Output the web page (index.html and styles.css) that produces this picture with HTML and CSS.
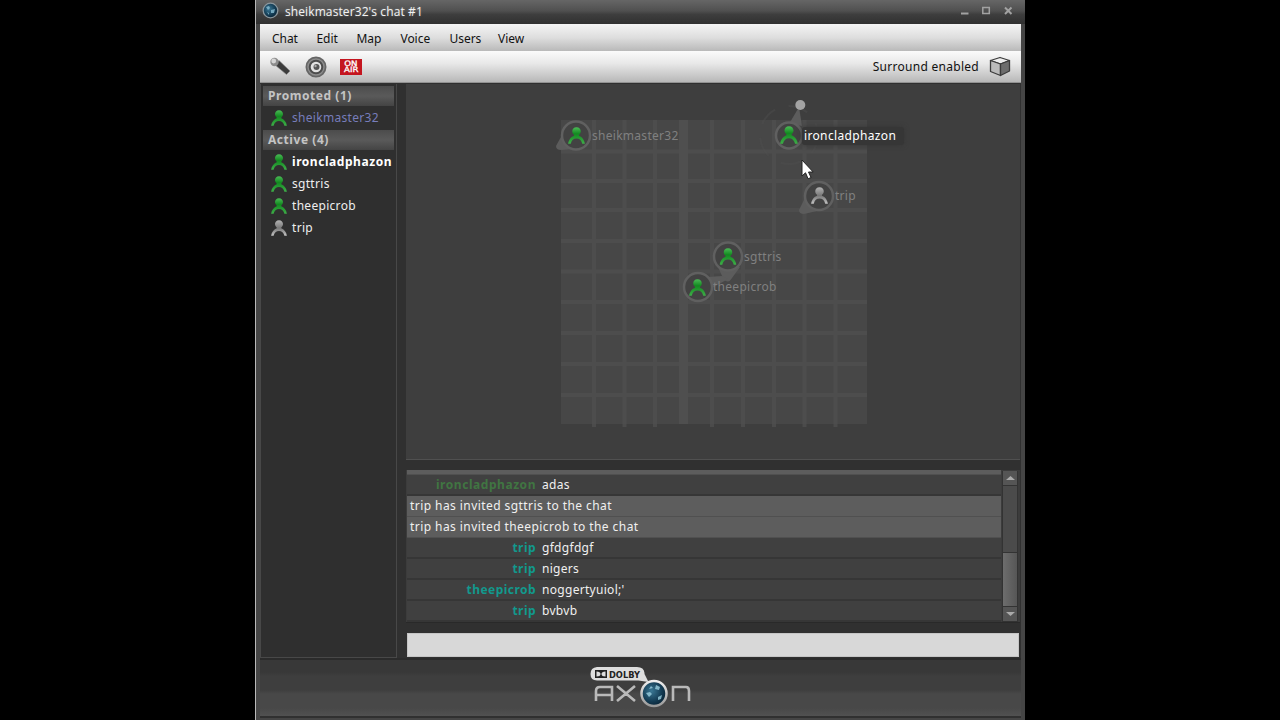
FILE: index.html
```html
<!DOCTYPE html>
<html lang="en">
<head>
<meta charset="utf-8">
<title>sheikmaster32's chat #1</title>
<link rel="stylesheet" href="styles.css">
</head>
<body>
<svg class="defs" width="0" height="0">
  <defs>
    <linearGradient id="green" x1="0" y1="0" x2="0" y2="1"><stop offset="0" stop-color="#4cbb57"/><stop offset=".4" stop-color="#128a20"/><stop offset="1" stop-color="#3fae49"/></linearGradient>
    <linearGradient id="grey" x1="0" y1="0" x2="0" y2="1"><stop offset="0" stop-color="#b4b4b4"/><stop offset=".5" stop-color="#777"/><stop offset="1" stop-color="#c4c4c4"/></linearGradient>
    <radialGradient id="globe" cx=".4" cy=".4" r=".7"><stop offset="0" stop-color="#3a7794"/><stop offset=".6" stop-color="#133b53"/><stop offset="1" stop-color="#071c2b"/></radialGradient>
    <linearGradient id="metal" x1="0" y1="0" x2="0" y2="1"><stop offset="0" stop-color="#eee"/><stop offset="1" stop-color="#999"/></linearGradient>
    <symbol id="person" viewBox="0 0 16 16"><path d="M8 .2c2.600 0 4 1.800 4 3.900 0 1.600-.9 2.700-1.700 3.300v.8c2.600.9 5.100 3.600 5.600 7.600h-2.500c-.7-3.200-2.600-4.900-5.400-4.900S3.300 12.600 2.600 15.800h-2.500c.5-4 3-6.700 5.600-7.600v-.8C4.900 6.800 4 5.700 4 4.100 4 2 5.400.2 8 .2z"/></symbol>
  </defs>
</svg>
<div class="window">
  <header class="titlebar">
    <svg class="app-icon" width="17" height="17" viewBox="0 0 17 17"><circle cx="8.500" cy="8.500" r="7.300" fill="url(#globe)" stroke="#8b979d" stroke-width="1.300"/><path d="M4 5l3-1 1 2-2 2zM9 8l4-1-1 4-3 0zM5 10l2 1 0 2z" fill="#8fc4da" opacity=".75"/></svg>
    <span class="title">sheikmaster32's chat #1</span>
    <svg class="controls" width="54" height="12" viewBox="0 0 54 12" fill="none" stroke="#a2a2a2"><path d="M1 8.500h7.500" stroke-width="2"/><path d="M22.800 2.500h6.500v6h-6.500z" stroke-width="1.500"/><path d="M45 2.500l6.500 6.500M51.500 2.500L45 9" stroke-width="2"/></svg>
  </header>
  <nav class="menu"><span>Chat</span><span>Edit</span><span>Map</span><span>Voice</span><span>Users</span><span>View</span></nav>
  <div class="toolbar">
    <svg class="mic" width="24" height="22" viewBox="0 0 24 22"><path d="M6.500 8.500l4.500-4 11 10.500-3.500 3.500z" fill="#3c3c3c" stroke="#888" stroke-width=".6"/><circle cx="6.500" cy="6" r="4.200" fill="#8d8d8d"/><circle cx="5.700" cy="5" r="2.400" fill="#d6d6d6"/></svg>
    <svg class="speaker" width="24" height="24" viewBox="0 0 24 24"><circle cx="12" cy="12" r="9.600" fill="#8d8d8d" stroke="#666" stroke-width="1.800"/><circle cx="12" cy="12" r="6.300" fill="#e2e2e2" stroke="#4c4c4c" stroke-width="2"/><circle cx="12.500" cy="12" r="3" fill="#555"/><circle cx="11.500" cy="11" r="1.200" fill="#aaa"/></svg>
    <div class="onair"><span>ON</span><span>AIR</span></div>
    <span class="surround">Surround enabled</span>
    <svg class="cube" width="22" height="22" viewBox="0 0 22 22" stroke="#3b3b3b" stroke-width="1.300" stroke-linejoin="round"><path d="M1.500 4.500L11 1.500 20.500 4.500 11.500 8z" fill="#eee"/><path d="M1.500 4.500l10 3.500V19.500l-10-4z" fill="#bbb"/><path d="M11.500 8l9-3.500v10.500l-9 4.500z" fill="#6d6d6d"/></svg>
  </div>
  <main class="content">
    <aside class="sidebar">
      <h2>Promoted (1)</h2>
      <div class="user promoted"><svg class="person green"><use href="#person"/></svg><span>sheikmaster32</span></div>
      <h2>Active (4)</h2>
      <div class="user self"><svg class="person green"><use href="#person"/></svg><span>ironcladphazon</span></div>
      <div class="user"><svg class="person green"><use href="#person"/></svg><span>sgttris</span></div>
      <div class="user"><svg class="person green"><use href="#person"/></svg><span>theepicrob</span></div>
      <div class="user"><svg class="person grey"><use href="#person"/></svg><span>trip</span></div>
    </aside>
    <section class="main">
      <div class="map">
        <svg class="grid" width="614" height="375" viewBox="406 84 614 375">
          <path d="M561 120h306v304H561z" fill="#474747"/>
          <path d="M594 120v307M624.500 120v307M655 120v307M712 120v307M743 120v307M774 120v307M804.500 120v307M835.500 120v307M561 151.500h306M561 181h306M561 210h306M561 241h306M561 271.500h306M561 302h306M561 333h306M561 364h306M561 395h306" stroke="#505050" stroke-width="4" opacity=".75"/>
          <path d="M683.500 120v304" stroke="#4f4f4f" stroke-width="9"/>
          <circle cx="789" cy="135" r="29" fill="none" stroke="#505050" stroke-width="2" stroke-dasharray="20 14" opacity=".4"/>
          <g fill="#5c5c5c"><path d="M562 135l-6 11q0 4 5 4l14-1z"/><path d="M799 107l-10 17 13 2z"/><path d="M805 198l-6 12q0 4 5 4l17-4z"/><path d="M718 267l5 11q5 7 9 0l8-11z"/><path d="M708 277l14-1 6 3-16 9z"/></g>
          <g fill="#424242" stroke="#606060" stroke-width="2.500"><circle cx="576" cy="135.500" r="14"/><circle cx="789" cy="135.500" r="13"/><circle cx="819" cy="196" r="14"/><circle cx="728" cy="256.500" r="14"/><circle cx="698" cy="287" r="14"/></g>
          <circle cx="800.300" cy="105" r="5" fill="#a3a3a3"/>
          <g fill="url(#green)"><use href="#person" x="567.500" y="127" width="18" height="17"/><use href="#person" x="780" y="126" width="18" height="18"/><use href="#person" x="719.500" y="248" width="17" height="17"/><use href="#person" x="689" y="279" width="17" height="17"/></g>
          <use href="#person" x="811" y="187" width="17" height="17" fill="url(#grey)"/>
        </svg>
        <span class="pin p1">sheikmaster32</span>
        <span class="pin p2">ironcladphazon</span>
        <span class="pin p3">trip</span>
        <span class="pin p4">sgttris</span>
        <span class="pin p5">theepicrob</span>
        <svg class="cursor" width="14" height="21" viewBox="0 0 14 21"><path d="M1 1v16l3.500-3.200 2.600 6 3-1.300-2.600-5.500h4.700z" fill="#fff" stroke="#222" stroke-width="1"/></svg>
      </div>
      <div class="chat">
        <div class="log">
          <div class="line system cut"></div>
          <div class="line"><b class="olive">ironcladphazon</b><span>adas</span></div>
          <div class="line system"><span>trip has invited sgttris to the chat</span></div>
          <div class="line system"><span>trip has invited theepicrob to the chat</span></div>
          <div class="line"><b>trip</b><span>gfdgfdgf</span></div>
          <div class="line"><b>trip</b><span>nigers</span></div>
          <div class="line"><b>theepicrob</b><span>noggertyuiol;'</span></div>
          <div class="line"><b>trip</b><span>bvbvb</span></div>
        </div>
        <div class="scroll">
          <div class="btn"><svg width="9" height="6"><path d="M0 5l4.500-4L9 5z" fill="#aaa"/></svg></div>
          <div class="track"></div>
          <div class="thumb"></div>
          <div class="btn"><svg width="9" height="6"><path d="M0 1l4.500 4L9 1z" fill="#aaa"/></svg></div>
        </div>
      </div>
      <div class="entry"></div>
    </section>
  </main>
  <footer class="footer">
    <svg width="104" height="46" viewBox="589 663 104 46">
      <path d="M597 667h40q7 0 7.500 6v1l4 8-10-1.500h-41.500q-6.500 0-6.500-6.500t6.500-7z" fill="#dedede"/>
      <path d="M595 670h12v8h-12z" fill="#222"/><path d="M596.500 671.500q4 0 4 2.500t-4 2.500zM605.500 671.500q-4 0-4 2.500t4 2.500z" fill="#dedede"/>
      <text x="609" y="677.500" class="dolby" textLength="31" lengthAdjust="spacingAndGlyphs">DOLBY</text>
      <g fill="none" stroke="#b9b9b9" stroke-width="2.600"><path d="M596 701v-10q0-4 4-4h12v14M597 695h15M617 686l18 15M635 686l-18 15M673 701v-14h13q3 0 3 4v10"/></g>
      <circle cx="654" cy="693.500" r="12.500" fill="url(#globe)" stroke="url(#metal)" stroke-width="2.500"/>
      <path d="M646 693l4-1 2 2-3 3zM656 685l4 2-1 3-4-1zM658 697l4-2-1 4-3 1zM651 686l2 2-4 1z" fill="#9bd0e0" opacity=".8"/>
    </svg>
  </footer>
</div>
</body>
</html>
```
FILE: styles.css
```css
* { box-sizing: border-box; }
body { margin: 0; width: 1280px; height: 720px; overflow: hidden; background: #000; font: 12px/16px "Noto Sans", "Open Sans", sans-serif; }
.defs { position: absolute; }
.window { width: 770px; height: 720px; margin-left: 255px; padding: 0 4px; border-left: 1px solid #b8b8b8; background: #454545; display: flex; flex-direction: column; }
.titlebar { height: 24px; margin: 0 -4px; padding: 0 11px 0 6px; flex: none; display: flex; align-items: center; background: linear-gradient(#666, #505050 45%, #3e3e3e 60%, #303030); }
.app-icon { margin-top: -3px; }
.title { margin-left: 6px; font: 12px/16px "Open Sans", sans-serif; color: #f2f2f2; text-shadow: 0 0 2px #aaa8; letter-spacing: .1px; flex: 1; }
.controls { margin-top: -2px; }
.menu { height: 27px; flex: none; padding-left: 12px; display: grid; grid-template-columns: 44.500px 40px 44px 49px 48.500px 60px; align-items: center; background: linear-gradient(#f4f4f4, #dedede 50%, #b9b9b9); color: #111; }
.menu span { margin-top: 2px; letter-spacing: -.05px; }
.toolbar { height: 32px; flex: none; padding: 0 10px 0 8px; display: flex; align-items: center; background: linear-gradient(#fbfbfb, #e8e8e8 40%, #b8b8b8); border-bottom: 1px solid #929292; }
.speaker { margin-left: 12px; }
.onair { margin-left: 12px; width: 22px; height: 16px; background: #c4151f; color: #fff; display: flex; flex-direction: column; align-items: center; font: 7.500px/7px "DejaVu Sans", sans-serif; padding-top: 1px; }
.onair span { height: 6.500px; transform: scaleX(1.15); -webkit-text-stroke: .3px #fff; }
.surround { margin-left: auto; margin-right: 10px; color: #111; letter-spacing: .28px; }
.content { height: 575px; flex: none; display: flex; background: #303030; border-top: 1px solid #303030; }
.sidebar { width: 137px; height: 574px; padding: 2px 3px 0 3px; background: #2f2f2f; border: 1px solid #484848; border-top: 0; }
.sidebar h2 { height: 20px; margin: 0 0 2px -1px; width: 131px; padding-left: 5px; font: bold 12px/20px "Noto Sans", sans-serif; letter-spacing: .55px; color: #c4c4c4; background: linear-gradient(#4c4c4c, #5a5a5a 50%, #444); }
.user { height: 22px; display: flex; align-items: center; padding: 0 0 3px 7px; color: #eee; white-space: nowrap; letter-spacing: .3px; }
.user span { margin-left: 5px; }
.promoted { color: #777dbb; }
.self { font-weight: bold; color: #fff; letter-spacing: .55px; }
.person { width: 16px; height: 16px; flex: none; }
.green { fill: url(#green); }
.grey { fill: url(#grey); }
.main { margin-left: 9px; width: 614px; display: flex; flex-direction: column; }
.map { position: relative; height: 376px; border-bottom: 1px solid #505050; background: #3e3e3e; }
.grid { display: block; }
.pin { position: absolute; color: #808080; letter-spacing: .28px; white-space: nowrap; }
.p1 { left: 186px; top: 44px; }
.p2 { left: 396px; top: 43px; padding: 1px 8px 1px 2px; color: #fff; background: #363636; border-radius: 3px; box-shadow: 0 0 5px #363636; letter-spacing: .35px; }
.p3 { left: 429px; top: 104px; }
.p4 { left: 338px; top: 165px; }
.p5 { left: 307px; top: 195px; }
.cursor { position: absolute; left: 395px; top: 75px; }
.chat { display: flex; margin-top: 10px; height: 153px; background: #3c3c3c; border-bottom: 1px solid #292929; }
.log { width: 594px; margin-left: 1px; }
.line { height: 21px; padding-top: 1px; display: flex; align-items: center; gap: 6px; border-bottom: 2px solid #363636; background: #404040; color: #f0f0f0; letter-spacing: .3px; }
.line b { width: 129px; text-align: right; color: #12998d; letter-spacing: .45px; }
.line .olive { color: #407542; letter-spacing: .55px; }
.system { background: #5d5d5d; border-bottom: 1px solid #505050; padding: 0 0 0 3px; letter-spacing: .43px; }
.cut { height: 5px; padding: 0; }
.scroll { width: 16px; margin: 1px 0 0 1px; padding: 0 1px; background: #333; display: flex; flex-direction: column; gap: 1px; }
.btn { height: 14px; background: #555; display: flex; align-items: center; justify-content: center; }
.track { height: 66px; background: #4b4b4b; }
.thumb { height: 53px; background: linear-gradient(90deg, #6d6d6d, #565656); }
.entry { height: 24px; margin: 10px 1px 0; background: #d8d8d8; border: 1px solid #c5c5c5; }
.footer { height: 60px; padding-top: 5px; flex: none; display: flex; justify-content: center; background: linear-gradient(#2b2b2b 0 2px, #383838 2px 14px, #3e3e3e 18px 32px, #484848 36px 50px, #515151); border-bottom: 2px solid #303030; }
.dolby { font: 900 9px "DejaVu Sans", sans-serif; fill: #222; }
```
